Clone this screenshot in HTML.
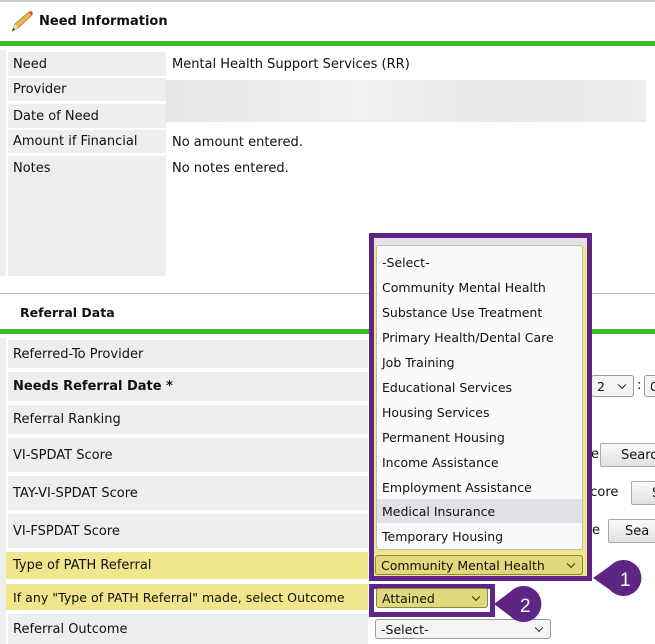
<!DOCTYPE html>
<html><head><meta charset="utf-8"><style>
*{margin:0;padding:0;box-sizing:border-box}
body{width:655px;height:644px;overflow:hidden;background:#fff;font-family:"DejaVu Sans","Liberation Sans",sans-serif;font-size:13px;color:#111;position:relative}
.a{position:absolute}
.lab{position:absolute;background:#eee;padding-left:5px;display:flex;align-items:center}
.t{position:absolute;white-space:nowrap}
.sel{position:absolute;border:1px solid #999;border-radius:3px;background:#f4f4f4;padding-left:5px;display:flex;align-items:center;font-size:12.5px}
.sel:after{content:"";position:absolute;right:8px;top:50%;width:5px;height:5px;border-right:1.5px solid #222;border-bottom:1.5px solid #222;transform:translateY(-70%) rotate(45deg)}
.btn{position:absolute;border:1px solid #aaa;background:linear-gradient(#fafafa,#e2e2e2);border-radius:2px;padding-left:20px;display:flex;align-items:center}
.it{position:absolute;left:382px;font-size:12.5px}
</style></head><body>
<div class="a" style="left:0;top:0;width:655px;height:2px;background:#ccc"></div>
<svg class="a" style="left:8px;top:9px" width="26" height="26" viewBox="0 0 26 26"><path d="M4 22 L7 15 L21 3 L24 6 L10 19 Z" fill="#e9b84a" stroke="#a77a22" stroke-width="0.8"/><path d="M21 3 L24 6 L25 4 L23 2 Z" fill="#d33"/><path d="M4 22 L7 15 L10 19 Z" fill="#f3dcb0"/><path d="M4 22 L5.5 19 L7 20.5Z" fill="#333"/></svg>
<div class="t" style="left:39px;top:14px;font-weight:bold;font-size:13px">Need Information</div>
<div class="a" style="left:0;top:41px;width:655px;height:5px;background:#3dbb2a"></div>
<div class="a" style="left:0;top:50px;width:6px;height:226px;background:#eee"></div>
<div class="lab" style="left:8px;top:52px;width:158px;height:24px">Need</div>
<div class="lab" style="left:8px;top:78px;width:158px;height:23px">Provider</div>
<div class="lab" style="left:8px;top:104px;width:158px;height:24px">Date of Need</div>
<div class="lab" style="left:8px;top:130px;width:158px;height:23px">Amount if Financial</div>
<div class="lab" style="left:8px;top:156px;width:158px;height:24px;align-items:center">Notes</div>
<div class="a" style="left:8px;top:180px;width:158px;height:96px;background:#eee"></div>
<div class="t" style="left:172px;top:57px">Mental Health Support Services (RR)</div>
<div class="a" style="left:166px;top:80px;width:480px;height:42px;background:linear-gradient(90deg,#e6e6e6,#f2f2f2 40%,#e8e8e8 70%,#eee)"></div>
<div class="t" style="left:172px;top:135px">No amount entered.</div>
<div class="t" style="left:172px;top:161px">No notes entered.</div>
<div class="a" style="left:0;top:293px;width:655px;height:1px;background:#bbb"></div>
<div class="t" style="left:20px;top:305px;font-weight:bold;font-size:12.5px">Referral Data</div>
<div class="a" style="left:0;top:329px;width:655px;height:5px;background:#3dbb2a"></div>
<div class="a" style="left:0;top:338px;width:6px;height:306px;background:#eee"></div>
<div class="lab" style="left:8px;top:340px;width:360px;height:28px">Referred-To Provider</div>
<div class="lab" style="left:8px;top:372px;width:360px;height:29px;font-weight:bold">Needs Referral Date *</div>
<div class="lab" style="left:8px;top:405px;width:360px;height:29px">Referral Ranking</div>
<div class="lab" style="left:8px;top:438px;width:360px;height:34px">VI-SPDAT Score</div>
<div class="lab" style="left:8px;top:476px;width:360px;height:34px">TAY-VI-SPDAT Score</div>
<div class="lab" style="left:8px;top:514px;width:360px;height:34px">VI-FSPDAT Score</div>
<div class="lab" style="left:6px;top:552px;width:362px;height:27px;background:#f0e68c;padding-left:7px">Type of PATH Referral</div>
<div class="lab" style="left:6px;top:584px;width:362px;height:26px;background:#f0e68c;padding-left:7px;font-size:12.6px">If any "Type of PATH Referral" made, select Outcome</div>
<div class="lab" style="left:8px;top:614px;width:360px;height:30px">Referral Outcome</div>
<div class="sel" style="left:591px;top:375px;width:43px;height:22px;background:#f4f4f4">2</div>
<div class="t" style="left:637px;top:378px">:</div>
<div class="sel" style="left:644px;top:375px;width:30px;height:22px">0</div>
<div class="t" style="left:591px;top:447px">e</div>
<div class="btn" style="left:600px;top:443px;width:60px;height:24px">Searc</div>
<div class="t" style="left:582px;top:485px">Score</div>
<div class="btn" style="left:631px;top:481px;width:40px;height:24px">S</div>
<div class="t" style="left:592px;top:523px">e</div>
<div class="btn" style="left:608px;top:519px;width:60px;height:24px;padding-left:16px">Sea</div>
<!-- dropdown -->
<div class="a" style="left:369px;top:233px;width:223px;height:348px;border:5px solid #5e2585;background:#f0e68c"></div>
<div class="a" style="left:374px;top:238px;width:213px;height:8px;background:#e4e4e4"></div>
<div class="a" style="left:376px;top:245px;width:207px;height:305px;background:#fafafc;border:1px solid #bbb;border-radius:3px"></div>
<div class="a" style="left:377px;top:499px;width:205px;height:24px;background:#e2e2e6"></div>
<div class="it" style="top:255px">-Select-</div>
<div class="it" style="top:280px">Community Mental Health</div>
<div class="it" style="top:305px">Substance Use Treatment</div>
<div class="it" style="top:330px">Primary Health/Dental Care</div>
<div class="it" style="top:355px">Job Training</div>
<div class="it" style="top:380px">Educational Services</div>
<div class="it" style="top:405px">Housing Services</div>
<div class="it" style="top:430px">Permanent Housing</div>
<div class="it" style="top:455px">Income Assistance</div>
<div class="it" style="top:480px">Employment Assistance</div>
<div class="it" style="top:504px">Medical Insurance</div>
<div class="it" style="top:529px">Temporary Housing</div>
<div class="sel" style="left:375px;top:555px;width:208px;height:20px;background:#e2d97a;border-color:#8a844a;font-size:12.5px">Community Mental Health</div>
<div class="a" style="left:369px;top:584px;width:126px;height:33px;border:5px solid #5e2585;background:#fff"></div>
<div class="sel" style="left:376px;top:588px;width:112px;height:20px;background:#e2d97a;border-color:#8a844a;font-size:12.5px">Attained</div>
<div class="sel" style="left:375px;top:619px;width:176px;height:20px;font-size:12.5px">-Select-</div>
<svg class="a" style="left:588px;top:555px" width="60" height="48"><path d="M5 23 L22 11 A18 18 0 1 1 22 35 Z" fill="#5e2585"/><text x="32" y="31" fill="#fff" font-family="Liberation Sans" font-size="19">1</text></svg>
<svg class="a" style="left:490px;top:581px" width="60" height="48"><path d="M4 23 L20 11 A18 18 0 1 1 20 35 Z" fill="#5e2585"/><text x="30" y="31" fill="#fff" font-family="Liberation Sans" font-size="19">2</text></svg>
</body></html>
